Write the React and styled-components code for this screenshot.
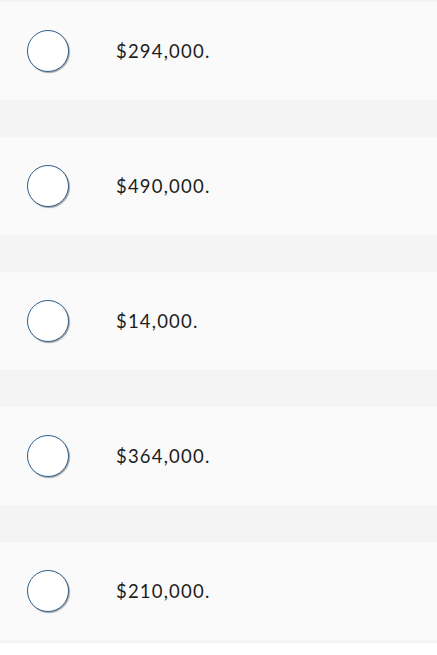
import React from "react";
import styled, { createGlobalStyle } from "styled-components";

const GlobalStyle = createGlobalStyle`
  body {
    margin: 0;
    background: #ffffff;
    font-family: Lato, "Open Sans", sans-serif;
  }
`;

const OptionsList = styled.div`
  display: flex;
  flex-direction: column;
  gap: 37px;
  width: 437px;
  padding: 2px 0 3px;
  background: #f4f4f4;
`;

const OptionRow = styled.label`
  display: flex;
  align-items: center;
  height: 98px;
  padding-left: 27px;
  background: #fafafa;
  box-sizing: border-box;
  cursor: pointer;
`;

const Radio = styled.span`
  width: 42px;
  height: 42px;
  border-radius: 50%;
  border: 1.5px solid #2f5f8d;
  background: #ffffff;
  box-sizing: border-box;
  box-shadow: 1px 1px 1px rgba(0, 0, 0, 0.35);
  flex-shrink: 0;
`;

const OptionText = styled.span`
  margin-left: 47px;
  font-size: 18.5px;
  line-height: 24px;
  letter-spacing: 1.2px;
  color: #1e1e1e;
`;

const options = ["$294,000.", "$490,000.", "$14,000.", "$364,000.", "$210,000."];

export default function App() {
  return (
    <>
      <GlobalStyle />
      <OptionsList>
        {options.map((o) => (
          <OptionRow key={o}>
            <Radio />
            <OptionText>{o}</OptionText>
          </OptionRow>
        ))}
      </OptionsList>
    </>
  );
}
